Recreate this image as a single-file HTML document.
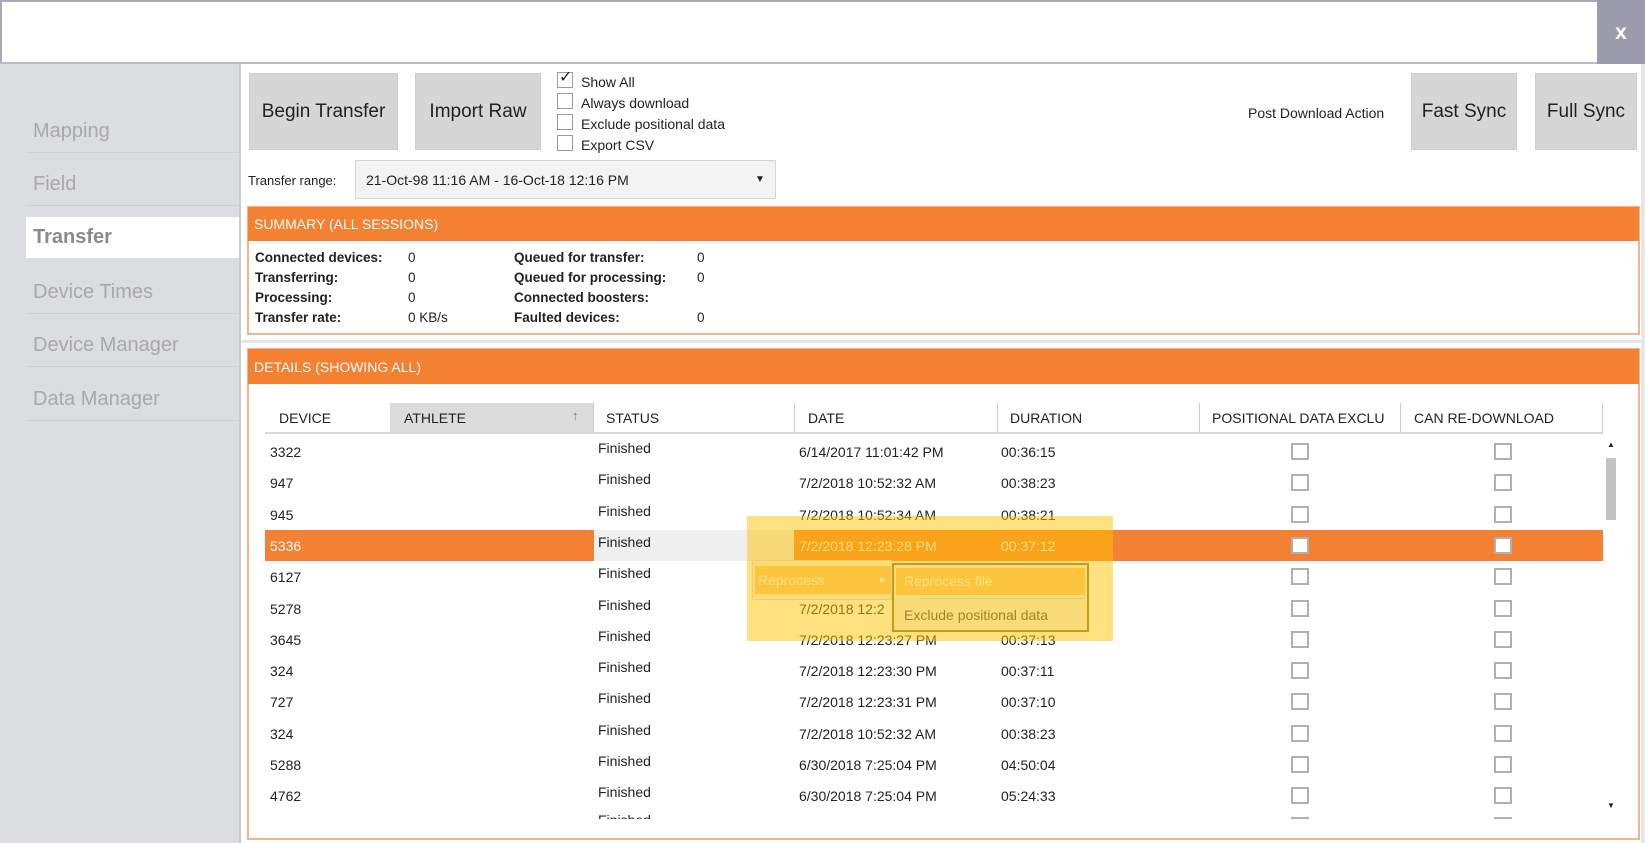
<!DOCTYPE html>
<html><head><meta charset="utf-8"><style>
*{margin:0;padding:0;box-sizing:border-box}
body{width:1645px;height:843px;position:relative;overflow:hidden;background:#fff;font-family:"Liberation Sans",sans-serif;color:#222}
.a{position:absolute;white-space:nowrap}
.side{font-size:20px;color:#a8a8a8;left:33px}
.dv{position:absolute;left:26px;width:213px;height:1px;background:#cfd0d3}
.btn{position:absolute;background:#d6d6d6;border:1px solid #cdcdcd;font-size:19px;color:#222;display:flex;align-items:center;justify-content:center}
.cb{position:absolute;width:16px;height:16px;border:1px solid #9a9a9a;background:#fff}
.lbl{font-size:14px}
.sb{font-size:13.5px;font-weight:bold}
.sv{font-size:13.5px}
.hd{font-size:14px;color:#222}
.cell{font-size:14px}
.rcb{position:absolute;width:18px;height:17px;border:2px solid #b0b0b0;background:#fff}
</style></head><body>
<div class="a" style="left:0;top:0;width:1645px;height:2px;background:#a8aabb"></div>
<div class="a" style="left:0;top:0;width:2px;height:64px;background:#a8aabb"></div>
<div class="a" style="left:0;top:62px;width:1597px;height:2px;background:#b9bbc6"></div>
<div class="a" style="left:1597px;top:0;width:48px;height:64px;background:#9a9cae;color:#fff;font-weight:bold;font-size:21px;text-align:center;line-height:66px">x</div>

<div class="a" style="left:0;top:64px;width:241px;height:779px;background:#dcdde0"></div>
<div class="a side" style="top:120px">Mapping</div><div class="dv" style="top:152px"></div>
<div class="a side" style="top:173px">Field</div><div class="dv" style="top:205px"></div>
<div class="a" style="left:26px;top:217px;width:215px;height:41px;background:#fff"></div>
<div class="a side" style="top:226px;font-weight:bold;color:#8a8a8a">Transfer</div>
<div class="a side" style="top:281px">Device Times</div><div class="dv" style="top:313px"></div>
<div class="a side" style="top:334px">Device Manager</div><div class="dv" style="top:366px"></div>
<div class="a side" style="top:388px">Data Manager</div><div class="dv" style="top:420px"></div>

<div class="a" style="left:239px;top:64px;width:2px;height:779px;background:#c9cad2"></div>
<div class="a" style="left:1641px;top:64px;width:4px;height:779px;background:#e6e7ea"></div>

<div class="btn" style="left:249px;top:73px;width:149px;height:77px">Begin Transfer</div>
<div class="btn" style="left:415px;top:73px;width:126px;height:77px">Import Raw</div>
<div class="cb" style="left:557px;top:72px"></div><div class="a" style="left:559px;top:67px;font-size:16px">✓</div>
<div class="a lbl" style="left:581px;top:74px">Show All</div>
<div class="cb" style="left:557px;top:93px"></div><div class="a lbl" style="left:581px;top:95px">Always download</div>
<div class="cb" style="left:557px;top:114px"></div><div class="a lbl" style="left:581px;top:116px">Exclude positional data</div>
<div class="cb" style="left:557px;top:135px"></div><div class="a lbl" style="left:581px;top:137px">Export CSV</div>
<div class="a" style="left:1248px;top:105px;font-size:14px">Post Download Action</div>
<div class="btn" style="left:1411px;top:73px;width:106px;height:77px">Fast Sync</div>
<div class="btn" style="left:1535px;top:73px;width:102px;height:77px">Full Sync</div>

<div class="a" style="left:248px;top:173px;font-size:13px">Transfer range:</div>
<div class="a" style="left:355px;top:160px;width:421px;height:39px;background:#f3f3f3;border:1px solid #d4d4d4"></div>
<div class="a" style="left:366px;top:172px;font-size:14px">21-Oct-98 11:16 AM - 16-Oct-18 12:16 PM</div>
<div class="a" style="left:755px;top:174px;font-size:10px">▼</div>

<div class="a" style="left:247px;top:206px;width:1393px;height:129px;border:2px solid #f4b48a"></div>
<div class="a" style="left:248px;top:207px;width:1391px;height:34px;background:#f48032;color:#fff;font-size:14px;padding:9px 0 0 6px">SUMMARY (ALL SESSIONS)</div>
<div class="a sb" style="left:255px;top:250px">Connected devices:</div><div class="a sv" style="left:408px;top:250px">0</div>
<div class="a sb" style="left:255px;top:270px">Transferring:</div><div class="a sv" style="left:408px;top:270px">0</div>
<div class="a sb" style="left:255px;top:290px">Processing:</div><div class="a sv" style="left:408px;top:290px">0</div>
<div class="a sb" style="left:255px;top:310px">Transfer rate:</div><div class="a sv" style="left:408px;top:310px">0 KB/s</div>
<div class="a sb" style="left:514px;top:250px">Queued for transfer:</div><div class="a sv" style="left:697px;top:250px">0</div>
<div class="a sb" style="left:514px;top:270px">Queued for processing:</div><div class="a sv" style="left:697px;top:270px">0</div>
<div class="a sb" style="left:514px;top:290px">Connected boosters:</div>
<div class="a sb" style="left:514px;top:310px">Faulted devices:</div><div class="a sv" style="left:697px;top:310px">0</div>

<div class="a" style="left:241px;top:340px;width:1400px;height:3px;background:#e4e5e8"></div>

<div class="a" style="left:247px;top:348px;width:1393px;height:492px;border:2px solid #f4b48a"></div>
<div class="a" style="left:248px;top:349px;width:1391px;height:35px;background:#f48032;color:#fff;font-size:14px;padding:10px 0 0 6px">DETAILS (SHOWING ALL)</div>

<div class="a" style="left:390px;top:403px;width:203px;height:30px;background:#dcdcdc"></div>
<div class="a" style="left:265px;top:432px;width:1338px;height:2px;background:#d8d8d8"></div>
<div class="a" style="left:593px;top:403px;width:1px;height:30px;background:#ccc"></div>
<div class="a" style="left:794px;top:403px;width:1px;height:30px;background:#ccc"></div>
<div class="a" style="left:997px;top:403px;width:1px;height:30px;background:#ccc"></div>
<div class="a" style="left:1199px;top:403px;width:1px;height:30px;background:#ccc"></div>
<div class="a" style="left:1400px;top:403px;width:1px;height:30px;background:#ccc"></div>
<div class="a" style="left:1602px;top:403px;width:1px;height:30px;background:#ccc"></div>
<div class="a hd" style="left:279px;top:410px">DEVICE</div>
<div class="a hd" style="left:404px;top:410px">ATHLETE</div>
<div class="a" style="left:572px;top:408px;font-size:13px;color:#777">↑</div>
<div class="a hd" style="left:606px;top:410px">STATUS</div>
<div class="a hd" style="left:808px;top:410px">DATE</div>
<div class="a hd" style="left:1010px;top:410px">DURATION</div>
<div class="a hd" style="left:1212px;top:410px">POSITIONAL DATA EXCLU</div>
<div class="a hd" style="left:1414px;top:410px">CAN RE-DOWNLOAD</div>

<!-- selected row -->
<div class="a" style="left:265px;top:530px;width:329px;height:31px;background:#f48032"></div>
<div class="a" style="left:594px;top:530px;width:200px;height:31px;background:#efefef"></div>
<div class="a" style="left:794px;top:530px;width:809px;height:31px;background:#f48032"></div>

<div id="rows"></div>
<script>
var d=[["3322","6/14/2017 11:01:42 PM","00:36:15"],["947","7/2/2018 10:52:32 AM","00:38:23"],["945","7/2/2018 10:52:34 AM","00:38:21"],["5336","7/2/2018 12:23:28 PM","00:37:12"],["6127","",""],["5278","7/2/2018 12:2",""],["3645","7/2/2018 12:23:27 PM","00:37:13"],["324","7/2/2018 12:23:30 PM","00:37:11"],["727","7/2/2018 12:23:31 PM","00:37:10"],["324","7/2/2018 10:52:32 AM","00:38:23"],["5288","6/30/2018 7:25:04 PM","04:50:04"],["4762","6/30/2018 7:25:04 PM","05:24:33"]];
var h="";
for(var i=0;i<d.length;i++){var y=444+i*31.3;var c=i==3?"color:#fff;":"";
h+='<div class="a cell" style="left:270px;top:'+y+'px;'+c+'">'+d[i][0]+'</div>';
h+='<div class="a cell" style="left:598px;top:'+(y-4)+'px">Finished</div>';
h+='<div class="a cell" style="left:799px;top:'+y+'px;'+c+'">'+d[i][1]+'</div>';
h+='<div class="a cell" style="left:1001px;top:'+y+'px;'+c+'">'+d[i][2]+'</div>';
h+='<div class="rcb" style="left:1291px;top:'+(y-1)+'px"></div><div class="rcb" style="left:1494px;top:'+(y-1)+'px"></div>';}
h+='<div class="a cell" style="left:598px;top:812px;height:7px;overflow:hidden">Finished</div>';
h+='<div class="a" style="left:1291px;top:817px;width:18px;height:2px;background:#b0b0b0"></div><div class="a" style="left:1494px;top:817px;width:18px;height:2px;background:#b0b0b0"></div>';
document.getElementById("rows").innerHTML=h;
</script>
<div class="a" style="left:1607px;top:440px;font-size:8px">▲</div>
<div class="a" style="left:1606px;top:458px;width:10px;height:62px;background:#c2c2c2"></div>
<div class="a" style="left:1607px;top:801px;font-size:8px">▼</div>

<!-- context menu -->
<div class="a" style="left:752px;top:560px;width:140px;height:40px;background:#f3f3f3;border:1px solid #ddd"></div>
<div class="a" style="left:755px;top:566px;width:136px;height:28px;background:#f8c77a"></div>
<div class="a" style="left:758px;top:572px;font-size:14px;color:#fff">Reprocess</div>
<div class="a" style="left:880px;top:575px;font-size:8px;color:#fff">▶</div>
<div class="a" style="left:892px;top:563px;width:197px;height:69px;background:#f3f3f3;border:2px solid #8a7330"></div>
<div class="a" style="left:896px;top:568px;width:189px;height:27px;background:#f8c77a"></div>
<div class="a" style="left:904px;top:573px;font-size:14px;color:#fff">Reprocess file</div>
<div class="a" style="left:920px;top:598px;width:165px;height:1px;background:#ccc"></div>
<div class="a" style="left:904px;top:607px;font-size:14px;color:#444">Exclude positional data</div>
<!-- highlight -->
<div class="a" style="left:747px;top:516px;width:366px;height:125px;background:rgba(255,196,0,0.5)"></div>
</body></html>
